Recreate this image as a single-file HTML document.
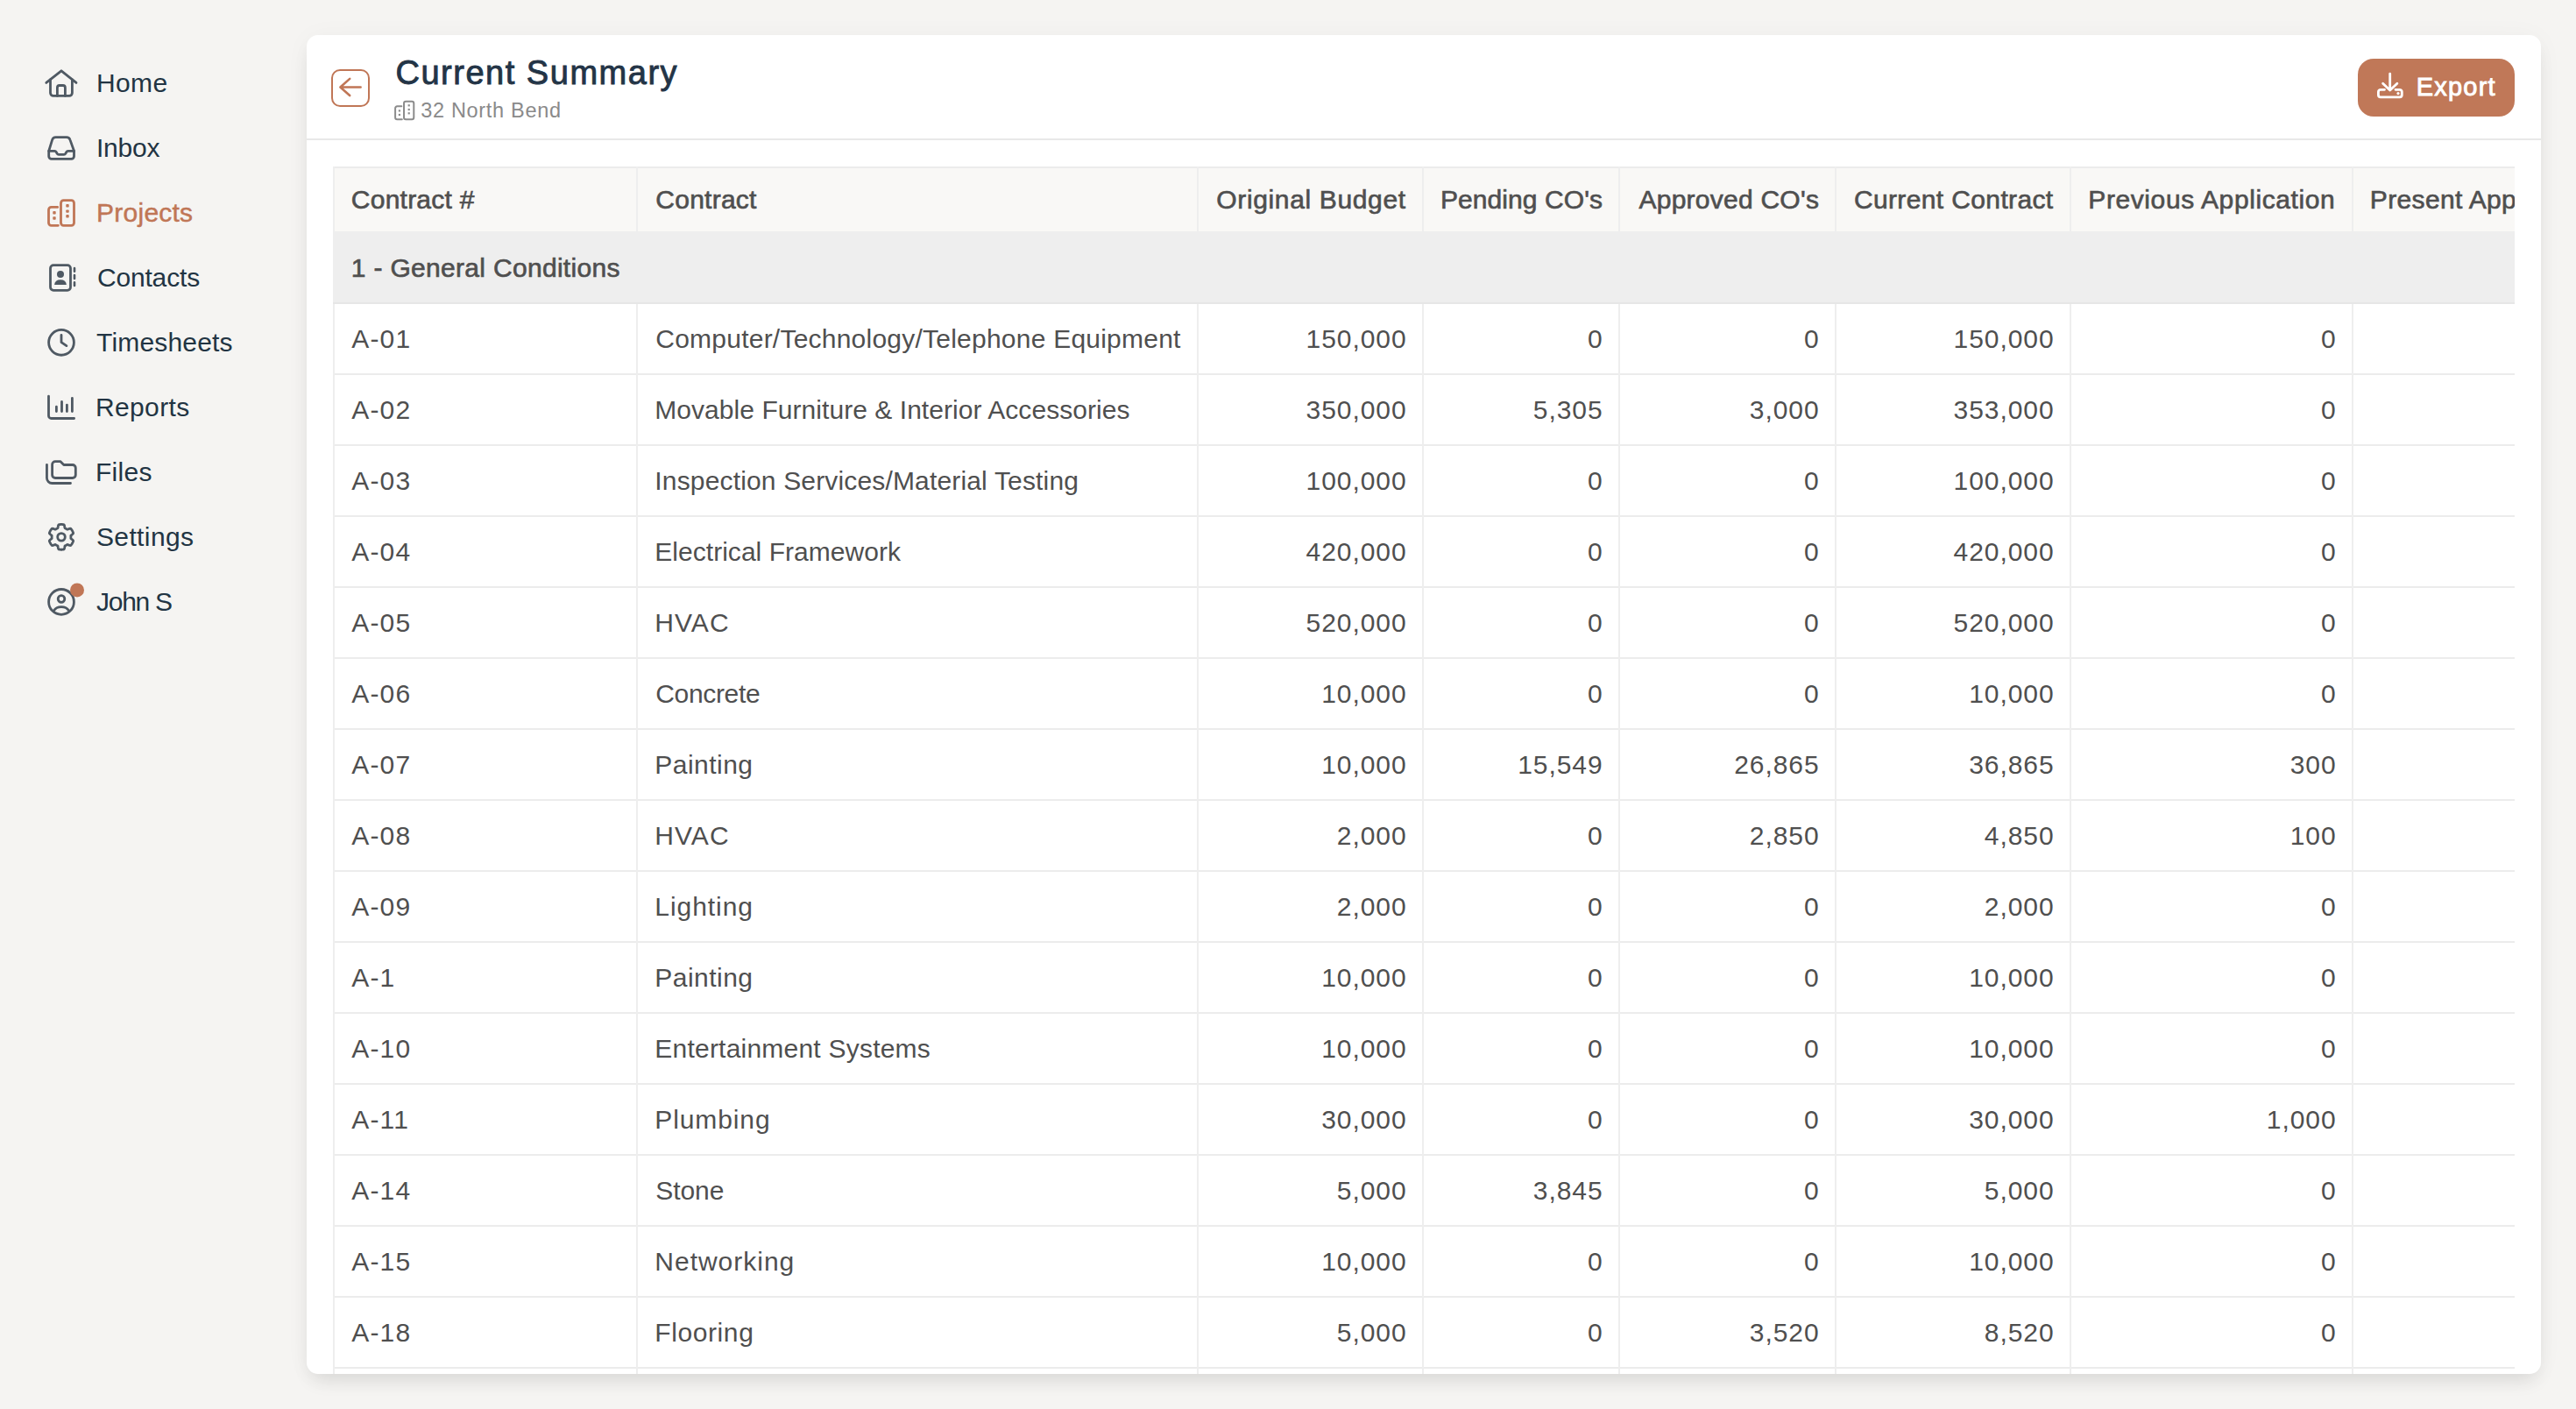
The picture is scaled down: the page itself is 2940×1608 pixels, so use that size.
<!DOCTYPE html>
<html><head><meta charset="utf-8"><title>Current Summary</title><style>*{box-sizing:border-box;margin:0;padding:0}
html,body{width:2940px;height:1608px;overflow:hidden;background:#f5f4f2;font-family:"Liberation Sans", sans-serif;position:relative}
.a{position:absolute}
.x{position:absolute;white-space:nowrap;font-family:"Liberation Sans", sans-serif}
#clip{position:absolute;left:0;top:0;width:2870px;height:1568px;overflow:hidden}
</style></head>
<body>
<svg class="a" style="left:0;top:0" width="120" height="720" viewBox="0 0 120 720" fill="none" stroke="#4f5963" stroke-width="2.8" stroke-linecap="round" stroke-linejoin="round">
<path d="M52.8 94.4 L70 80.8 L87 94.4"/>
<path d="M57.5 91 V106 a3.4 3.4 0 0 0 3.4 3.4 H79 a3.4 3.4 0 0 0 3.4 -3.4 V91"/>
<path d="M65.4 109.4 V100 a2.5 2.5 0 0 1 2.5 -2.5 H71.9 a2.5 2.5 0 0 1 2.5 2.5 V109.4"/>
<path d="M55.7 172.3 L59.6 159.6 Q60.5 156.6 63.6 156.6 H76 Q79.1 156.6 80 159.6 L84.5 172.3 V178.3 a3 3 0 0 1 -3 3 H58.7 a3 3 0 0 1 -3 -3 Z"/>
<path d="M55.7 172.3 H62.4 Q63.6 172.3 64.2 173.5 L65.2 175.3 Q65.8 176.3 67 176.3 H73 Q74.2 176.3 74.8 175.3 L75.8 173.5 Q76.4 172.3 77.6 172.3 H84.5"/>
<g stroke="#c07656">
<rect x="69.5" y="228.7" width="15" height="28.6" rx="3"/>
<path d="M65.7 236.4 H58.5 a3 3 0 0 0 -3 3 V254.3 a3 3 0 0 0 3 3 H66.4"/>
<g fill="#c07656" stroke="none">
<rect x="75.3" y="233.1" width="3.4" height="3.4" rx="0.8"/><rect x="75.3" y="239.4" width="3.4" height="3.4" rx="0.8"/><rect x="75.3" y="245.1" width="3.4" height="3.4" rx="0.8"/><rect x="60.3" y="241.1" width="3.4" height="3.4" rx="0.8"/><rect x="60.3" y="247.3" width="3.4" height="3.4" rx="0.8"/>
</g></g>
<rect x="57.5" y="302.7" width="23" height="28.6" rx="3.5"/>
<path d="M85 306 V309.7 M85 314.1 V317.9 M85 322.3 V325.9" stroke-width="2.6"/>
<circle cx="69" cy="312.9" r="4" fill="#4f5963" stroke="none"/>
<path d="M62.1 324.9 Q62.6 319.2 69 319.2 Q75.4 319.2 75.9 324.9 Z" fill="#4f5963" stroke="none"/>
<circle cx="70" cy="390.85" r="14.4"/>
<path d="M70 382.3 V390.6 L75.9 394.6"/>
<path d="M55.5 452.2 V474.5 a3 3 0 0 0 3 3 H84.6"/>
<path d="M64.4 464.2 V469.6 M70.5 458.4 V469.6 M76.4 462.1 V469.6 M82.4 454.3 V469.6"/>
<path d="M59.6 530.1 a3.5 3.5 0 0 1 3.5 -3.5 H68.8 L72.8 530.5 H82.8 a3.5 3.5 0 0 1 3.5 3.5 V542 a3.5 3.5 0 0 1 -3.5 3.5 H63.1 a3.5 3.5 0 0 1 -3.5 -3.5 Z"/>
<path d="M53.45 530.3 V545.5 a6 6 0 0 0 6 6 H80.5"/>
<path d="M70.00 598.45 L70.25 598.45 L70.50 598.46 L70.75 598.47 L71.00 598.49 L71.26 598.50 L71.51 598.53 L71.75 598.56 L72.00 598.59 L72.25 598.63 L72.50 598.67 L72.75 598.71 L72.98 598.82 L73.19 599.05 L73.36 599.38 L73.50 599.79 L73.61 600.25 L73.70 600.75 L73.77 601.25 L73.83 601.72 L73.90 602.13 L73.99 602.46 L74.11 602.69 L74.26 602.82 L74.43 602.89 L74.61 602.97 L74.78 603.05 L74.95 603.14 L75.12 603.23 L75.28 603.32 L75.45 603.41 L75.61 603.51 L75.78 603.61 L75.94 603.71 L76.10 603.81 L76.25 603.92 L76.41 604.03 L76.56 604.14 L76.75 604.21 L77.01 604.20 L77.34 604.11 L77.73 603.96 L78.16 603.79 L78.63 603.60 L79.10 603.42 L79.56 603.29 L79.99 603.20 L80.36 603.19 L80.66 603.25 L80.87 603.40 L81.03 603.59 L81.19 603.79 L81.35 603.98 L81.50 604.18 L81.65 604.39 L81.80 604.59 L81.94 604.80 L82.08 605.01 L82.21 605.22 L82.34 605.43 L82.47 605.65 L82.59 605.87 L82.71 606.09 L82.83 606.31 L82.94 606.54 L83.05 606.76 L83.16 606.99 L83.26 607.22 L83.35 607.46 L83.44 607.69 L83.53 607.92 L83.62 608.16 L83.64 608.42 L83.55 608.71 L83.35 609.02 L83.06 609.35 L82.71 609.68 L82.33 610.00 L81.93 610.31 L81.56 610.60 L81.24 610.87 L81.00 611.11 L80.85 611.32 L80.82 611.52 L80.84 611.71 L80.86 611.90 L80.87 612.09 L80.89 612.28 L80.89 612.47 L80.90 612.66 L80.90 612.85 L80.90 613.04 L80.89 613.23 L80.89 613.42 L80.87 613.61 L80.86 613.80 L80.84 613.99 L80.82 614.18 L80.85 614.38 L81.00 614.59 L81.24 614.83 L81.56 615.10 L81.93 615.39 L82.33 615.70 L82.71 616.02 L83.06 616.35 L83.35 616.68 L83.55 616.99 L83.64 617.28 L83.62 617.54 L83.53 617.78 L83.44 618.01 L83.35 618.24 L83.26 618.48 L83.16 618.71 L83.05 618.94 L82.94 619.16 L82.83 619.39 L82.71 619.61 L82.59 619.83 L82.47 620.05 L82.34 620.27 L82.21 620.48 L82.08 620.69 L81.94 620.90 L81.80 621.11 L81.65 621.31 L81.50 621.52 L81.35 621.72 L81.19 621.91 L81.03 622.11 L80.87 622.30 L80.66 622.45 L80.36 622.51 L79.99 622.50 L79.56 622.41 L79.10 622.28 L78.63 622.10 L78.16 621.91 L77.73 621.74 L77.34 621.59 L77.01 621.50 L76.75 621.49 L76.56 621.56 L76.41 621.67 L76.25 621.78 L76.10 621.89 L75.94 621.99 L75.78 622.09 L75.61 622.19 L75.45 622.29 L75.28 622.38 L75.12 622.47 L74.95 622.56 L74.78 622.65 L74.61 622.73 L74.43 622.81 L74.26 622.88 L74.11 623.01 L73.99 623.24 L73.90 623.57 L73.83 623.98 L73.77 624.45 L73.70 624.95 L73.61 625.45 L73.50 625.91 L73.36 626.32 L73.19 626.65 L72.98 626.88 L72.75 626.99 L72.50 627.03 L72.25 627.07 L72.00 627.11 L71.75 627.14 L71.51 627.17 L71.26 627.20 L71.00 627.21 L70.75 627.23 L70.50 627.24 L70.25 627.25 L70.00 627.25 L69.75 627.25 L69.50 627.24 L69.25 627.23 L69.00 627.21 L68.74 627.20 L68.49 627.17 L68.25 627.14 L68.00 627.11 L67.75 627.07 L67.50 627.03 L67.25 626.99 L67.02 626.88 L66.81 626.65 L66.64 626.32 L66.50 625.91 L66.39 625.45 L66.30 624.95 L66.23 624.45 L66.17 623.98 L66.10 623.57 L66.01 623.24 L65.89 623.01 L65.74 622.88 L65.57 622.81 L65.39 622.73 L65.22 622.65 L65.05 622.56 L64.88 622.47 L64.72 622.38 L64.55 622.29 L64.39 622.19 L64.22 622.09 L64.06 621.99 L63.90 621.89 L63.75 621.78 L63.59 621.67 L63.44 621.56 L63.25 621.49 L62.99 621.50 L62.66 621.59 L62.27 621.74 L61.84 621.91 L61.37 622.10 L60.90 622.28 L60.44 622.41 L60.01 622.50 L59.64 622.51 L59.34 622.45 L59.13 622.30 L58.97 622.11 L58.81 621.91 L58.65 621.72 L58.50 621.52 L58.35 621.31 L58.20 621.11 L58.06 620.90 L57.92 620.69 L57.79 620.48 L57.66 620.27 L57.53 620.05 L57.41 619.83 L57.29 619.61 L57.17 619.39 L57.06 619.16 L56.95 618.94 L56.84 618.71 L56.74 618.48 L56.65 618.24 L56.56 618.01 L56.47 617.78 L56.38 617.54 L56.36 617.28 L56.45 616.99 L56.65 616.68 L56.94 616.35 L57.29 616.02 L57.67 615.70 L58.07 615.39 L58.44 615.10 L58.76 614.83 L59.00 614.59 L59.15 614.38 L59.18 614.18 L59.16 613.99 L59.14 613.80 L59.13 613.61 L59.11 613.42 L59.11 613.23 L59.10 613.04 L59.10 612.85 L59.10 612.66 L59.11 612.47 L59.11 612.28 L59.13 612.09 L59.14 611.90 L59.16 611.71 L59.18 611.52 L59.15 611.32 L59.00 611.11 L58.76 610.87 L58.44 610.60 L58.07 610.31 L57.67 610.00 L57.29 609.68 L56.94 609.35 L56.65 609.02 L56.45 608.71 L56.36 608.42 L56.38 608.16 L56.47 607.92 L56.56 607.69 L56.65 607.46 L56.74 607.22 L56.84 606.99 L56.95 606.76 L57.06 606.54 L57.17 606.31 L57.29 606.09 L57.41 605.87 L57.53 605.65 L57.66 605.43 L57.79 605.22 L57.92 605.01 L58.06 604.80 L58.20 604.59 L58.35 604.39 L58.50 604.18 L58.65 603.98 L58.81 603.79 L58.97 603.59 L59.13 603.40 L59.34 603.25 L59.64 603.19 L60.01 603.20 L60.44 603.29 L60.90 603.42 L61.37 603.60 L61.84 603.79 L62.27 603.96 L62.66 604.11 L62.99 604.20 L63.25 604.21 L63.44 604.14 L63.59 604.03 L63.75 603.92 L63.90 603.81 L64.06 603.71 L64.22 603.61 L64.39 603.51 L64.55 603.41 L64.72 603.32 L64.88 603.23 L65.05 603.14 L65.22 603.05 L65.39 602.97 L65.57 602.89 L65.74 602.82 L65.89 602.69 L66.01 602.46 L66.10 602.13 L66.17 601.72 L66.23 601.25 L66.30 600.75 L66.39 600.25 L66.50 599.79 L66.64 599.38 L66.81 599.05 L67.02 598.82 L67.25 598.71 L67.50 598.67 L67.75 598.63 L68.00 598.59 L68.25 598.56 L68.49 598.53 L68.74 598.50 L69.00 598.49 L69.25 598.47 L69.50 598.46 L69.75 598.45 Z"/>
<circle cx="70" cy="612.85" r="4.3"/>
<circle cx="70" cy="686.9" r="14.4"/>
<circle cx="70" cy="683.5" r="3.8"/>
<path d="M61.6 696.8 Q64 692.7 70 692.7 Q76 692.7 78.4 696.8"/>
<circle cx="88" cy="673.4" r="8" fill="#c07656" stroke="none"/>
</svg>
<div class="a" style="left:350px;top:40px;width:2550px;height:1528px;background:#fff;border-radius:13px;box-shadow:0 12px 22px -6px rgba(0,0,0,0.11), 0 2px 30px rgba(0,0,0,0.035)"></div><div class="a" style="left:350px;top:158px;width:2550px;height:2px;background:#e8e8e8"></div><div class="a" style="left:378px;top:78.5px;width:44px;height:43px;border:2px solid #c07656;border-radius:10px"></div><svg class="a" style="left:378px;top:78px" width="44" height="44" viewBox="378 78 44 44" fill="none" stroke="#c07656" stroke-width="2.6" stroke-linecap="round" stroke-linejoin="round"><path d="M399.2 89.9 L388.4 99.5 L399.2 109 M388.6 99.5 H411.6"/></svg><svg class="a" style="left:446px;top:111px" width="32" height="30" viewBox="446 111 32 30" fill="none" stroke="#8c8c8c" stroke-width="2" stroke-linecap="round" stroke-linejoin="round">
<rect x="461" y="115.8" width="11.3" height="20.4" rx="2.2"/>
<path d="M458.3 121.3 H453.3 a2.2 2.2 0 0 0 -2.2 2.2 V134 a2.2 2.2 0 0 0 2.2 2.2 H458.8"/>
<g fill="#8c8c8c" stroke="none"><rect x="465.6" y="119.2" width="2.2" height="2.2"/><rect x="465.6" y="123.9" width="2.2" height="2.2"/><rect x="465.6" y="128.2" width="2.2" height="2.2"/><rect x="454.8" y="125.3" width="2.2" height="2.2"/><rect x="454.8" y="129.9" width="2.2" height="2.2"/></g></svg><div class="a" style="left:2691px;top:67px;width:179px;height:66px;border-radius:18px;background:#c07858"></div><svg class="a" style="left:2708px;top:78px" width="40" height="40" viewBox="2708 78 40 40" fill="none" stroke="#fff" stroke-width="2.8" stroke-linecap="round" stroke-linejoin="round">
<path d="M2727.7 84.1 V102.6 M2719.6 95.2 L2727.7 103.1 L2735.9 95.2"/>
<path d="M2721.5 102.3 H2717 a2.6 2.6 0 0 0 -2.6 2.6 V108.3 a2.6 2.6 0 0 0 2.6 2.6 H2738.7 a2.6 2.6 0 0 0 2.6 -2.6 V104.9 a2.6 2.6 0 0 0 -2.6 -2.6 H2734"/>
<circle cx="2737" cy="106.6" r="1.6" fill="#fff" stroke="none"/></svg><div class="a" style="left:380px;top:190px;width:2490px;height:74px;background:#f9f8f6;border-top:2px solid #ececec"></div><div class="a" style="left:380px;top:264px;width:2490px;height:83px;background:#eeeeee"></div><div class="a" style="left:380px;top:426px;width:2490px;height:2px;background:#ececec"></div><div class="a" style="left:380px;top:507px;width:2490px;height:2px;background:#ececec"></div><div class="a" style="left:380px;top:588px;width:2490px;height:2px;background:#ececec"></div><div class="a" style="left:380px;top:669px;width:2490px;height:2px;background:#ececec"></div><div class="a" style="left:380px;top:750px;width:2490px;height:2px;background:#ececec"></div><div class="a" style="left:380px;top:831px;width:2490px;height:2px;background:#ececec"></div><div class="a" style="left:380px;top:912px;width:2490px;height:2px;background:#ececec"></div><div class="a" style="left:380px;top:993px;width:2490px;height:2px;background:#ececec"></div><div class="a" style="left:380px;top:1074px;width:2490px;height:2px;background:#ececec"></div><div class="a" style="left:380px;top:1155px;width:2490px;height:2px;background:#ececec"></div><div class="a" style="left:380px;top:1236px;width:2490px;height:2px;background:#ececec"></div><div class="a" style="left:380px;top:1317px;width:2490px;height:2px;background:#ececec"></div><div class="a" style="left:380px;top:1398px;width:2490px;height:2px;background:#ececec"></div><div class="a" style="left:380px;top:1479px;width:2490px;height:2px;background:#ececec"></div><div class="a" style="left:380px;top:1560px;width:2490px;height:2px;background:#ececec"></div><div class="a" style="left:380px;top:345px;width:2490px;height:2px;background:#e6e6e6"></div><div class="a" style="left:380px;top:190px;width:2px;height:74px;background:#eeeeee"></div><div class="a" style="left:380px;top:347px;width:2px;height:1221px;background:#eeeeee"></div><div class="a" style="left:726px;top:190px;width:2px;height:74px;background:#eeeeee"></div><div class="a" style="left:726px;top:347px;width:2px;height:1221px;background:#eeeeee"></div><div class="a" style="left:1366px;top:190px;width:2px;height:74px;background:#eeeeee"></div><div class="a" style="left:1366px;top:347px;width:2px;height:1221px;background:#eeeeee"></div><div class="a" style="left:1623px;top:190px;width:2px;height:74px;background:#eeeeee"></div><div class="a" style="left:1623px;top:347px;width:2px;height:1221px;background:#eeeeee"></div><div class="a" style="left:1847px;top:190px;width:2px;height:74px;background:#eeeeee"></div><div class="a" style="left:1847px;top:347px;width:2px;height:1221px;background:#eeeeee"></div><div class="a" style="left:2094px;top:190px;width:2px;height:74px;background:#eeeeee"></div><div class="a" style="left:2094px;top:347px;width:2px;height:1221px;background:#eeeeee"></div><div class="a" style="left:2362px;top:190px;width:2px;height:74px;background:#eeeeee"></div><div class="a" style="left:2362px;top:347px;width:2px;height:1221px;background:#eeeeee"></div><div class="a" style="left:2684px;top:190px;width:2px;height:74px;background:#eeeeee"></div><div class="a" style="left:2684px;top:347px;width:2px;height:1221px;background:#eeeeee"></div>
<div id="clip">
<div class="x" style="font-size:30px;color:#223443;letter-spacing:0.42px;top:80px;height:30px;line-height:30px;left:109.90px;">Home</div><div class="x" style="font-size:30px;color:#223443;letter-spacing:-0.20px;top:154px;height:30px;line-height:30px;left:109.90px;">Inbox</div><div class="x" style="font-size:30px;color:#c07656;letter-spacing:0.23px;top:228px;height:30px;line-height:30px;-webkit-text-stroke:0.45px #c07656;left:110.12px;">Projects</div><div class="x" style="font-size:30px;color:#223443;letter-spacing:-0.16px;top:302px;height:30px;line-height:30px;left:110.90px;">Contacts</div><div class="x" style="font-size:30px;color:#223443;letter-spacing:0.16px;top:376px;height:30px;line-height:30px;left:110.10px;">Timesheets</div><div class="x" style="font-size:30px;color:#223443;letter-spacing:0.39px;top:450px;height:30px;line-height:30px;left:108.90px;">Reports</div><div class="x" style="font-size:30px;color:#223443;letter-spacing:0.29px;top:524px;height:30px;line-height:30px;left:108.90px;">Files</div><div class="x" style="font-size:30px;color:#223443;letter-spacing:0.40px;top:598px;height:30px;line-height:30px;left:109.90px;">Settings</div><div class="x" style="font-size:30px;color:#223443;letter-spacing:-1.30px;top:672px;height:30px;line-height:30px;left:110.10px;">John S</div><div class="x" style="font-size:38px;color:#233446;letter-spacing:1.52px;top:64px;height:38px;line-height:38px;-webkit-text-stroke:0.9px #233446;left:451.45px;">Current Summary</div><div class="x" style="font-size:23.5px;color:#8a8a8a;letter-spacing:0.69px;top:115px;height:23.5px;line-height:23.5px;left:480.20px;">32 North Bend</div><div class="x" style="font-size:29px;color:#ffffff;letter-spacing:1.23px;top:85px;height:29px;line-height:29px;-webkit-text-stroke:0.9px #ffffff;left:2757.65px;">Export</div><div class="x" style="font-size:30px;color:#4f4f4f;letter-spacing:0.24px;top:213px;height:30px;line-height:30px;-webkit-text-stroke:0.65px #4f4f4f;left:400.82px;">Contract #</div><div class="x" style="font-size:30px;color:#4f4f4f;letter-spacing:0.24px;top:213px;height:30px;line-height:30px;-webkit-text-stroke:0.65px #4f4f4f;left:748.33px;">Contract</div><div class="x" style="font-size:30px;color:#4f4f4f;letter-spacing:0.64px;top:213px;height:30px;line-height:30px;-webkit-text-stroke:0.65px #4f4f4f;left:1388.33px;">Original Budget</div><div class="x" style="font-size:30px;color:#4f4f4f;letter-spacing:0.08px;top:213px;height:30px;line-height:30px;-webkit-text-stroke:0.65px #4f4f4f;left:1643.92px;">Pending CO's</div><div class="x" style="font-size:30px;color:#4f4f4f;letter-spacing:0.24px;top:213px;height:30px;line-height:30px;-webkit-text-stroke:0.65px #4f4f4f;left:1870.53px;">Approved CO's</div><div class="x" style="font-size:30px;color:#4f4f4f;letter-spacing:0.37px;top:213px;height:30px;line-height:30px;-webkit-text-stroke:0.65px #4f4f4f;left:2115.92px;">Current Contract</div><div class="x" style="font-size:30px;color:#4f4f4f;letter-spacing:0.59px;top:213px;height:30px;line-height:30px;-webkit-text-stroke:0.65px #4f4f4f;left:2383.32px;">Previous Application</div><div class="x" style="font-size:30px;color:#4f4f4f;letter-spacing:0.35px;top:213px;height:30px;line-height:30px;-webkit-text-stroke:0.65px #4f4f4f;left:2704.82px;">Present Application</div><div class="x" style="font-size:30px;color:#4f4f4f;letter-spacing:0.31px;top:291px;height:30px;line-height:30px;-webkit-text-stroke:0.65px #4f4f4f;left:400.82px;">1 - General Conditions</div><div class="x" style="font-size:30px;color:#4f4f4f;letter-spacing:1.20px;top:372px;height:30px;line-height:30px;left:401.20px;">A-01</div><div class="x" style="font-size:30px;color:#4f4f4f;letter-spacing:0.23px;top:372px;height:30px;line-height:30px;left:748.30px;">Computer/Technology/Telephone Equipment</div><div class="x" style="font-size:30px;color:#4f4f4f;letter-spacing:0.95px;top:372px;height:30px;line-height:30px;left:1205.63px;width:400px;text-align:right;">150,000</div><div class="x" style="font-size:30px;color:#4f4f4f;letter-spacing:0.95px;top:372px;height:30px;line-height:30px;left:1429.63px;width:400px;text-align:right;">0</div><div class="x" style="font-size:30px;color:#4f4f4f;letter-spacing:0.95px;top:372px;height:30px;line-height:30px;left:1676.63px;width:400px;text-align:right;">0</div><div class="x" style="font-size:30px;color:#4f4f4f;letter-spacing:0.95px;top:372px;height:30px;line-height:30px;left:1944.63px;width:400px;text-align:right;">150,000</div><div class="x" style="font-size:30px;color:#4f4f4f;letter-spacing:0.95px;top:372px;height:30px;line-height:30px;left:2266.63px;width:400px;text-align:right;">0</div><div class="x" style="font-size:30px;color:#4f4f4f;letter-spacing:1.20px;top:453px;height:30px;line-height:30px;left:401.20px;">A-02</div><div class="x" style="font-size:30px;color:#4f4f4f;letter-spacing:0.05px;top:453px;height:30px;line-height:30px;left:747.30px;">Movable Furniture &amp; Interior Accessories</div><div class="x" style="font-size:30px;color:#4f4f4f;letter-spacing:0.95px;top:453px;height:30px;line-height:30px;left:1205.63px;width:400px;text-align:right;">350,000</div><div class="x" style="font-size:30px;color:#4f4f4f;letter-spacing:0.95px;top:453px;height:30px;line-height:30px;left:1429.63px;width:400px;text-align:right;">5,305</div><div class="x" style="font-size:30px;color:#4f4f4f;letter-spacing:0.95px;top:453px;height:30px;line-height:30px;left:1676.63px;width:400px;text-align:right;">3,000</div><div class="x" style="font-size:30px;color:#4f4f4f;letter-spacing:0.95px;top:453px;height:30px;line-height:30px;left:1944.63px;width:400px;text-align:right;">353,000</div><div class="x" style="font-size:30px;color:#4f4f4f;letter-spacing:0.95px;top:453px;height:30px;line-height:30px;left:2266.63px;width:400px;text-align:right;">0</div><div class="x" style="font-size:30px;color:#4f4f4f;letter-spacing:1.20px;top:534px;height:30px;line-height:30px;left:401.20px;">A-03</div><div class="x" style="font-size:30px;color:#4f4f4f;letter-spacing:0.16px;top:534px;height:30px;line-height:30px;left:747.30px;">Inspection Services/Material Testing</div><div class="x" style="font-size:30px;color:#4f4f4f;letter-spacing:0.95px;top:534px;height:30px;line-height:30px;left:1205.63px;width:400px;text-align:right;">100,000</div><div class="x" style="font-size:30px;color:#4f4f4f;letter-spacing:0.95px;top:534px;height:30px;line-height:30px;left:1429.63px;width:400px;text-align:right;">0</div><div class="x" style="font-size:30px;color:#4f4f4f;letter-spacing:0.95px;top:534px;height:30px;line-height:30px;left:1676.63px;width:400px;text-align:right;">0</div><div class="x" style="font-size:30px;color:#4f4f4f;letter-spacing:0.95px;top:534px;height:30px;line-height:30px;left:1944.63px;width:400px;text-align:right;">100,000</div><div class="x" style="font-size:30px;color:#4f4f4f;letter-spacing:0.95px;top:534px;height:30px;line-height:30px;left:2266.63px;width:400px;text-align:right;">0</div><div class="x" style="font-size:30px;color:#4f4f4f;letter-spacing:1.20px;top:615px;height:30px;line-height:30px;left:401.20px;">A-04</div><div class="x" style="font-size:30px;color:#4f4f4f;letter-spacing:0.03px;top:615px;height:30px;line-height:30px;left:747.30px;">Electrical Framework</div><div class="x" style="font-size:30px;color:#4f4f4f;letter-spacing:0.95px;top:615px;height:30px;line-height:30px;left:1205.63px;width:400px;text-align:right;">420,000</div><div class="x" style="font-size:30px;color:#4f4f4f;letter-spacing:0.95px;top:615px;height:30px;line-height:30px;left:1429.63px;width:400px;text-align:right;">0</div><div class="x" style="font-size:30px;color:#4f4f4f;letter-spacing:0.95px;top:615px;height:30px;line-height:30px;left:1676.63px;width:400px;text-align:right;">0</div><div class="x" style="font-size:30px;color:#4f4f4f;letter-spacing:0.95px;top:615px;height:30px;line-height:30px;left:1944.63px;width:400px;text-align:right;">420,000</div><div class="x" style="font-size:30px;color:#4f4f4f;letter-spacing:0.95px;top:615px;height:30px;line-height:30px;left:2266.63px;width:400px;text-align:right;">0</div><div class="x" style="font-size:30px;color:#4f4f4f;letter-spacing:1.20px;top:696px;height:30px;line-height:30px;left:401.20px;">A-05</div><div class="x" style="font-size:30px;color:#4f4f4f;letter-spacing:1.05px;top:696px;height:30px;line-height:30px;left:747.30px;">HVAC</div><div class="x" style="font-size:30px;color:#4f4f4f;letter-spacing:0.95px;top:696px;height:30px;line-height:30px;left:1205.63px;width:400px;text-align:right;">520,000</div><div class="x" style="font-size:30px;color:#4f4f4f;letter-spacing:0.95px;top:696px;height:30px;line-height:30px;left:1429.63px;width:400px;text-align:right;">0</div><div class="x" style="font-size:30px;color:#4f4f4f;letter-spacing:0.95px;top:696px;height:30px;line-height:30px;left:1676.63px;width:400px;text-align:right;">0</div><div class="x" style="font-size:30px;color:#4f4f4f;letter-spacing:0.95px;top:696px;height:30px;line-height:30px;left:1944.63px;width:400px;text-align:right;">520,000</div><div class="x" style="font-size:30px;color:#4f4f4f;letter-spacing:0.95px;top:696px;height:30px;line-height:30px;left:2266.63px;width:400px;text-align:right;">0</div><div class="x" style="font-size:30px;color:#4f4f4f;letter-spacing:1.20px;top:777px;height:30px;line-height:30px;left:401.20px;">A-06</div><div class="x" style="font-size:30px;color:#4f4f4f;letter-spacing:-0.35px;top:777px;height:30px;line-height:30px;left:748.30px;">Concrete</div><div class="x" style="font-size:30px;color:#4f4f4f;letter-spacing:0.95px;top:777px;height:30px;line-height:30px;left:1205.63px;width:400px;text-align:right;">10,000</div><div class="x" style="font-size:30px;color:#4f4f4f;letter-spacing:0.95px;top:777px;height:30px;line-height:30px;left:1429.63px;width:400px;text-align:right;">0</div><div class="x" style="font-size:30px;color:#4f4f4f;letter-spacing:0.95px;top:777px;height:30px;line-height:30px;left:1676.63px;width:400px;text-align:right;">0</div><div class="x" style="font-size:30px;color:#4f4f4f;letter-spacing:0.95px;top:777px;height:30px;line-height:30px;left:1944.63px;width:400px;text-align:right;">10,000</div><div class="x" style="font-size:30px;color:#4f4f4f;letter-spacing:0.95px;top:777px;height:30px;line-height:30px;left:2266.63px;width:400px;text-align:right;">0</div><div class="x" style="font-size:30px;color:#4f4f4f;letter-spacing:1.20px;top:858px;height:30px;line-height:30px;left:401.20px;">A-07</div><div class="x" style="font-size:30px;color:#4f4f4f;letter-spacing:0.47px;top:858px;height:30px;line-height:30px;left:747.30px;">Painting</div><div class="x" style="font-size:30px;color:#4f4f4f;letter-spacing:0.95px;top:858px;height:30px;line-height:30px;left:1205.63px;width:400px;text-align:right;">10,000</div><div class="x" style="font-size:30px;color:#4f4f4f;letter-spacing:0.95px;top:858px;height:30px;line-height:30px;left:1429.63px;width:400px;text-align:right;">15,549</div><div class="x" style="font-size:30px;color:#4f4f4f;letter-spacing:0.95px;top:858px;height:30px;line-height:30px;left:1676.63px;width:400px;text-align:right;">26,865</div><div class="x" style="font-size:30px;color:#4f4f4f;letter-spacing:0.95px;top:858px;height:30px;line-height:30px;left:1944.63px;width:400px;text-align:right;">36,865</div><div class="x" style="font-size:30px;color:#4f4f4f;letter-spacing:0.95px;top:858px;height:30px;line-height:30px;left:2266.63px;width:400px;text-align:right;">300</div><div class="x" style="font-size:30px;color:#4f4f4f;letter-spacing:1.20px;top:939px;height:30px;line-height:30px;left:401.20px;">A-08</div><div class="x" style="font-size:30px;color:#4f4f4f;letter-spacing:1.05px;top:939px;height:30px;line-height:30px;left:747.30px;">HVAC</div><div class="x" style="font-size:30px;color:#4f4f4f;letter-spacing:0.95px;top:939px;height:30px;line-height:30px;left:1205.63px;width:400px;text-align:right;">2,000</div><div class="x" style="font-size:30px;color:#4f4f4f;letter-spacing:0.95px;top:939px;height:30px;line-height:30px;left:1429.63px;width:400px;text-align:right;">0</div><div class="x" style="font-size:30px;color:#4f4f4f;letter-spacing:0.95px;top:939px;height:30px;line-height:30px;left:1676.63px;width:400px;text-align:right;">2,850</div><div class="x" style="font-size:30px;color:#4f4f4f;letter-spacing:0.95px;top:939px;height:30px;line-height:30px;left:1944.63px;width:400px;text-align:right;">4,850</div><div class="x" style="font-size:30px;color:#4f4f4f;letter-spacing:0.95px;top:939px;height:30px;line-height:30px;left:2266.63px;width:400px;text-align:right;">100</div><div class="x" style="font-size:30px;color:#4f4f4f;letter-spacing:1.20px;top:1020px;height:30px;line-height:30px;left:401.20px;">A-09</div><div class="x" style="font-size:30px;color:#4f4f4f;letter-spacing:0.94px;top:1020px;height:30px;line-height:30px;left:747.30px;">Lighting</div><div class="x" style="font-size:30px;color:#4f4f4f;letter-spacing:0.95px;top:1020px;height:30px;line-height:30px;left:1205.63px;width:400px;text-align:right;">2,000</div><div class="x" style="font-size:30px;color:#4f4f4f;letter-spacing:0.95px;top:1020px;height:30px;line-height:30px;left:1429.63px;width:400px;text-align:right;">0</div><div class="x" style="font-size:30px;color:#4f4f4f;letter-spacing:0.95px;top:1020px;height:30px;line-height:30px;left:1676.63px;width:400px;text-align:right;">0</div><div class="x" style="font-size:30px;color:#4f4f4f;letter-spacing:0.95px;top:1020px;height:30px;line-height:30px;left:1944.63px;width:400px;text-align:right;">2,000</div><div class="x" style="font-size:30px;color:#4f4f4f;letter-spacing:0.95px;top:1020px;height:30px;line-height:30px;left:2266.63px;width:400px;text-align:right;">0</div><div class="x" style="font-size:30px;color:#4f4f4f;letter-spacing:1.20px;top:1101px;height:30px;line-height:30px;left:401.20px;">A-1</div><div class="x" style="font-size:30px;color:#4f4f4f;letter-spacing:0.47px;top:1101px;height:30px;line-height:30px;left:747.30px;">Painting</div><div class="x" style="font-size:30px;color:#4f4f4f;letter-spacing:0.95px;top:1101px;height:30px;line-height:30px;left:1205.63px;width:400px;text-align:right;">10,000</div><div class="x" style="font-size:30px;color:#4f4f4f;letter-spacing:0.95px;top:1101px;height:30px;line-height:30px;left:1429.63px;width:400px;text-align:right;">0</div><div class="x" style="font-size:30px;color:#4f4f4f;letter-spacing:0.95px;top:1101px;height:30px;line-height:30px;left:1676.63px;width:400px;text-align:right;">0</div><div class="x" style="font-size:30px;color:#4f4f4f;letter-spacing:0.95px;top:1101px;height:30px;line-height:30px;left:1944.63px;width:400px;text-align:right;">10,000</div><div class="x" style="font-size:30px;color:#4f4f4f;letter-spacing:0.95px;top:1101px;height:30px;line-height:30px;left:2266.63px;width:400px;text-align:right;">0</div><div class="x" style="font-size:30px;color:#4f4f4f;letter-spacing:1.20px;top:1182px;height:30px;line-height:30px;left:401.20px;">A-10</div><div class="x" style="font-size:30px;color:#4f4f4f;letter-spacing:0.22px;top:1182px;height:30px;line-height:30px;left:747.30px;">Entertainment Systems</div><div class="x" style="font-size:30px;color:#4f4f4f;letter-spacing:0.95px;top:1182px;height:30px;line-height:30px;left:1205.63px;width:400px;text-align:right;">10,000</div><div class="x" style="font-size:30px;color:#4f4f4f;letter-spacing:0.95px;top:1182px;height:30px;line-height:30px;left:1429.63px;width:400px;text-align:right;">0</div><div class="x" style="font-size:30px;color:#4f4f4f;letter-spacing:0.95px;top:1182px;height:30px;line-height:30px;left:1676.63px;width:400px;text-align:right;">0</div><div class="x" style="font-size:30px;color:#4f4f4f;letter-spacing:0.95px;top:1182px;height:30px;line-height:30px;left:1944.63px;width:400px;text-align:right;">10,000</div><div class="x" style="font-size:30px;color:#4f4f4f;letter-spacing:0.95px;top:1182px;height:30px;line-height:30px;left:2266.63px;width:400px;text-align:right;">0</div><div class="x" style="font-size:30px;color:#4f4f4f;letter-spacing:1.20px;top:1263px;height:30px;line-height:30px;left:401.20px;">A-11</div><div class="x" style="font-size:30px;color:#4f4f4f;letter-spacing:0.89px;top:1263px;height:30px;line-height:30px;left:747.30px;">Plumbing</div><div class="x" style="font-size:30px;color:#4f4f4f;letter-spacing:0.95px;top:1263px;height:30px;line-height:30px;left:1205.63px;width:400px;text-align:right;">30,000</div><div class="x" style="font-size:30px;color:#4f4f4f;letter-spacing:0.95px;top:1263px;height:30px;line-height:30px;left:1429.63px;width:400px;text-align:right;">0</div><div class="x" style="font-size:30px;color:#4f4f4f;letter-spacing:0.95px;top:1263px;height:30px;line-height:30px;left:1676.63px;width:400px;text-align:right;">0</div><div class="x" style="font-size:30px;color:#4f4f4f;letter-spacing:0.95px;top:1263px;height:30px;line-height:30px;left:1944.63px;width:400px;text-align:right;">30,000</div><div class="x" style="font-size:30px;color:#4f4f4f;letter-spacing:0.95px;top:1263px;height:30px;line-height:30px;left:2266.63px;width:400px;text-align:right;">1,000</div><div class="x" style="font-size:30px;color:#4f4f4f;letter-spacing:1.20px;top:1344px;height:30px;line-height:30px;left:401.20px;">A-14</div><div class="x" style="font-size:30px;color:#4f4f4f;letter-spacing:-0.08px;top:1344px;height:30px;line-height:30px;left:748.30px;">Stone</div><div class="x" style="font-size:30px;color:#4f4f4f;letter-spacing:0.95px;top:1344px;height:30px;line-height:30px;left:1205.63px;width:400px;text-align:right;">5,000</div><div class="x" style="font-size:30px;color:#4f4f4f;letter-spacing:0.95px;top:1344px;height:30px;line-height:30px;left:1429.63px;width:400px;text-align:right;">3,845</div><div class="x" style="font-size:30px;color:#4f4f4f;letter-spacing:0.95px;top:1344px;height:30px;line-height:30px;left:1676.63px;width:400px;text-align:right;">0</div><div class="x" style="font-size:30px;color:#4f4f4f;letter-spacing:0.95px;top:1344px;height:30px;line-height:30px;left:1944.63px;width:400px;text-align:right;">5,000</div><div class="x" style="font-size:30px;color:#4f4f4f;letter-spacing:0.95px;top:1344px;height:30px;line-height:30px;left:2266.63px;width:400px;text-align:right;">0</div><div class="x" style="font-size:30px;color:#4f4f4f;letter-spacing:1.20px;top:1425px;height:30px;line-height:30px;left:401.20px;">A-15</div><div class="x" style="font-size:30px;color:#4f4f4f;letter-spacing:0.99px;top:1425px;height:30px;line-height:30px;left:747.30px;">Networking</div><div class="x" style="font-size:30px;color:#4f4f4f;letter-spacing:0.95px;top:1425px;height:30px;line-height:30px;left:1205.63px;width:400px;text-align:right;">10,000</div><div class="x" style="font-size:30px;color:#4f4f4f;letter-spacing:0.95px;top:1425px;height:30px;line-height:30px;left:1429.63px;width:400px;text-align:right;">0</div><div class="x" style="font-size:30px;color:#4f4f4f;letter-spacing:0.95px;top:1425px;height:30px;line-height:30px;left:1676.63px;width:400px;text-align:right;">0</div><div class="x" style="font-size:30px;color:#4f4f4f;letter-spacing:0.95px;top:1425px;height:30px;line-height:30px;left:1944.63px;width:400px;text-align:right;">10,000</div><div class="x" style="font-size:30px;color:#4f4f4f;letter-spacing:0.95px;top:1425px;height:30px;line-height:30px;left:2266.63px;width:400px;text-align:right;">0</div><div class="x" style="font-size:30px;color:#4f4f4f;letter-spacing:1.20px;top:1506px;height:30px;line-height:30px;left:401.20px;">A-18</div><div class="x" style="font-size:30px;color:#4f4f4f;letter-spacing:0.59px;top:1506px;height:30px;line-height:30px;left:747.30px;">Flooring</div><div class="x" style="font-size:30px;color:#4f4f4f;letter-spacing:0.95px;top:1506px;height:30px;line-height:30px;left:1205.63px;width:400px;text-align:right;">5,000</div><div class="x" style="font-size:30px;color:#4f4f4f;letter-spacing:0.95px;top:1506px;height:30px;line-height:30px;left:1429.63px;width:400px;text-align:right;">0</div><div class="x" style="font-size:30px;color:#4f4f4f;letter-spacing:0.95px;top:1506px;height:30px;line-height:30px;left:1676.63px;width:400px;text-align:right;">3,520</div><div class="x" style="font-size:30px;color:#4f4f4f;letter-spacing:0.95px;top:1506px;height:30px;line-height:30px;left:1944.63px;width:400px;text-align:right;">8,520</div><div class="x" style="font-size:30px;color:#4f4f4f;letter-spacing:0.95px;top:1506px;height:30px;line-height:30px;left:2266.63px;width:400px;text-align:right;">0</div>
</div>
</body></html>
